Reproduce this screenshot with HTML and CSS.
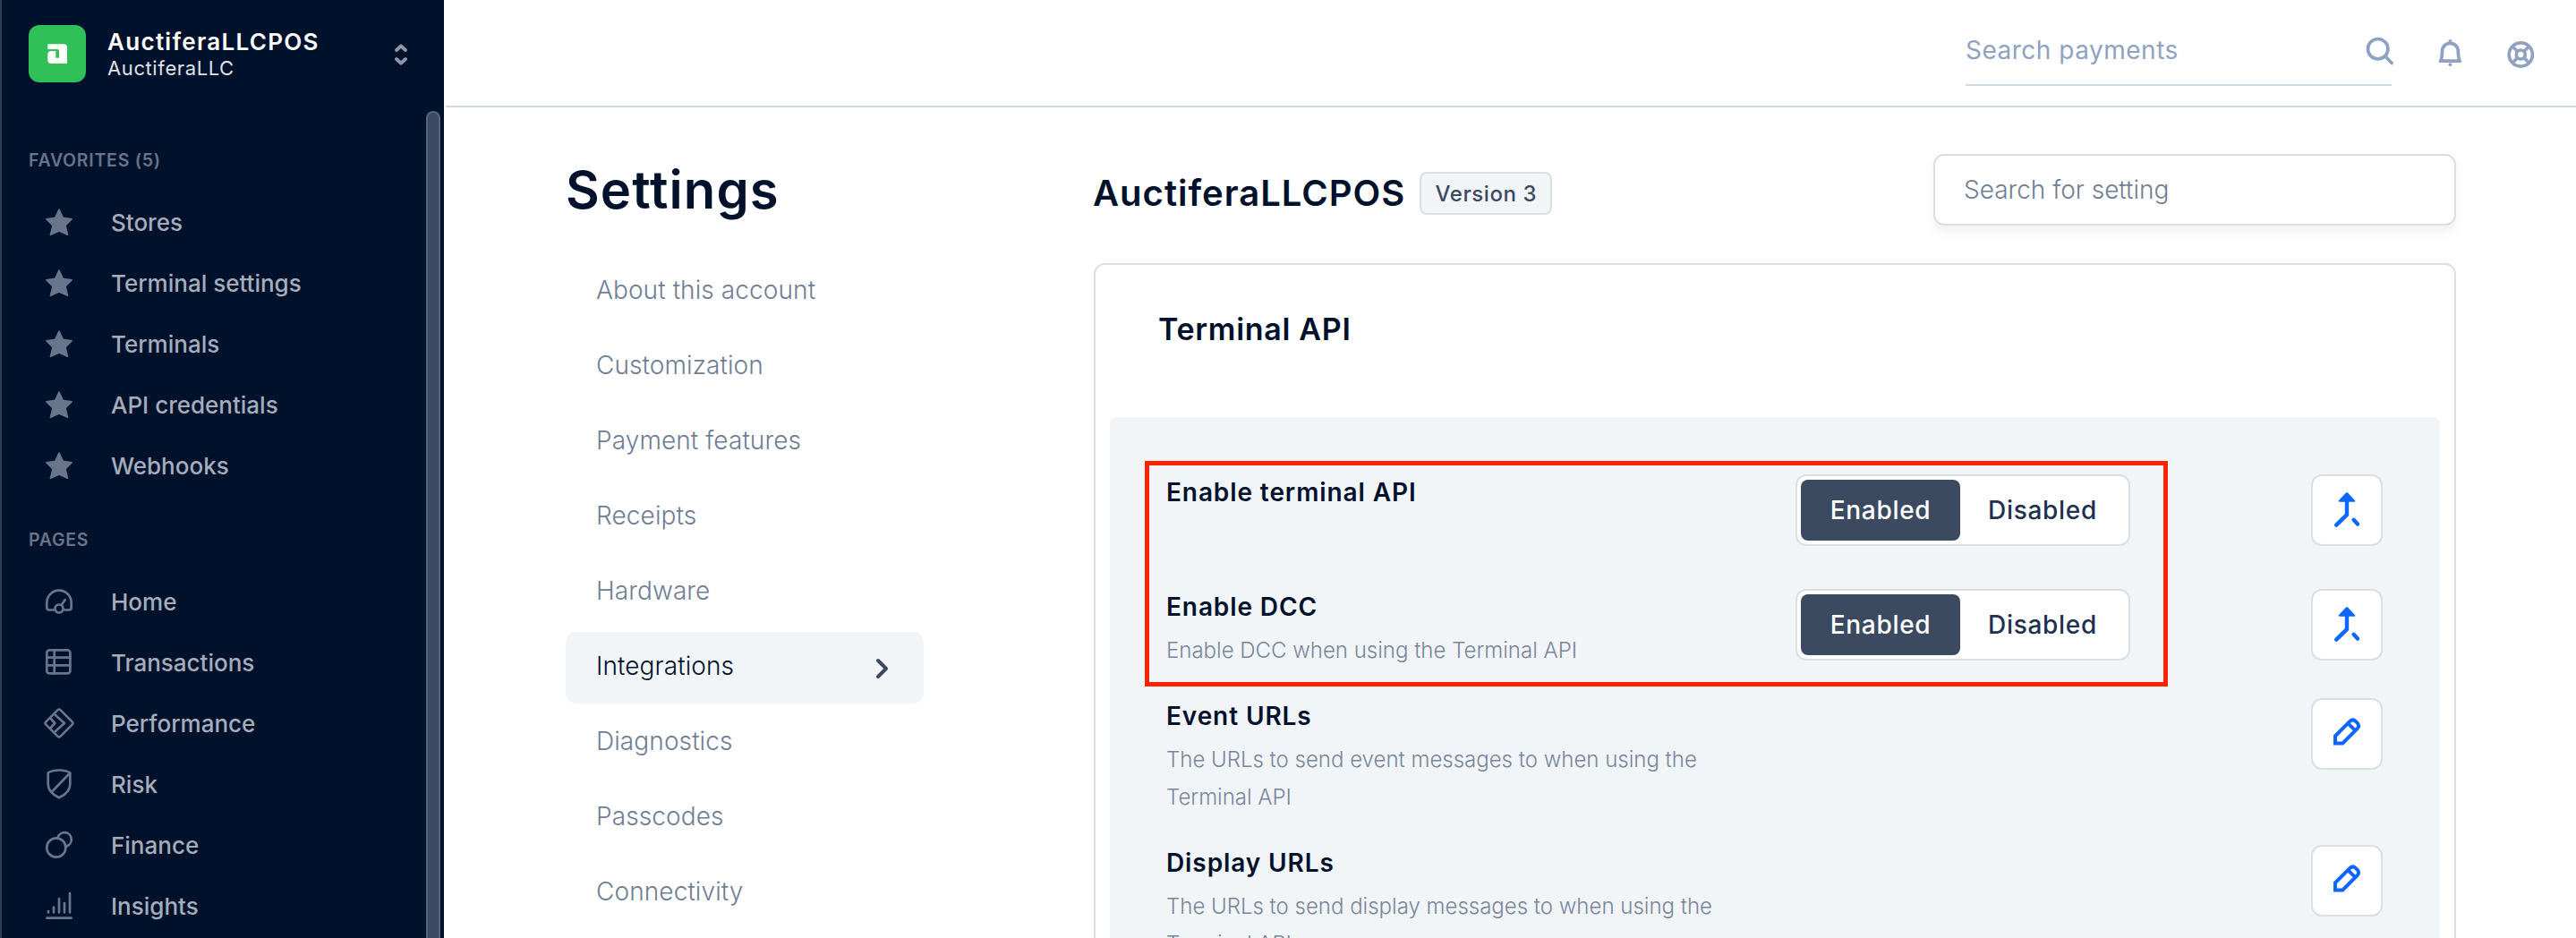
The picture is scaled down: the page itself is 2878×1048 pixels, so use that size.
FILE: index.html
```html
<!DOCTYPE html>
<html lang="en">
<head>
<meta charset="utf-8">
<title>Settings</title>
<link rel="stylesheet" href="styles.css">
</head>
<body>
<div class="app">
  <aside class="sidebar">
    <div class="account">
      <svg class="account-logo" viewBox="0 0 64 64"><rect width="64" height="64" rx="12" fill="#31c057"/><path fill="#fff" d="M21.3 21.3H39a4 4 0 0 1 4 4V43H25.3a4 4 0 0 1-4-4V33a4 4 0 0 1 4-4H30.3V36.7H34V29a2 2 0 0 0-2-2H21.3Z"/></svg>
      <div class="account-text">
        <div class="account-name">AuctiferaLLCPOS</div>
        <div class="account-company">AuctiferaLLC</div>
      </div>
      <svg class="account-switch" viewBox="0 0 20 28"><path d="M5 9 10 4.4 15 9M5 19l5 4.6L15 19"/></svg>
    </div>
    <div class="sidebar-body">
      <nav class="menu">
        <h2 class="menu-heading">FAVORITES (5)</h2>
        <a class="menu-item"><svg class="icon icon-solid" viewBox="0 0 36 36"><path d="M18 4 22.3 13.4 32.2 14.8 25 21.9 27.5 32.3 18 28 8.5 32.3 11 21.9 3.8 14.8 13.7 13.4Z"/></svg><span>Stores</span></a>
        <a class="menu-item"><svg class="icon icon-solid" viewBox="0 0 36 36"><path d="M18 4 22.3 13.4 32.2 14.8 25 21.9 27.5 32.3 18 28 8.5 32.3 11 21.9 3.8 14.8 13.7 13.4Z"/></svg><span>Terminal settings</span></a>
        <a class="menu-item"><svg class="icon icon-solid" viewBox="0 0 36 36"><path d="M18 4 22.3 13.4 32.2 14.8 25 21.9 27.5 32.3 18 28 8.5 32.3 11 21.9 3.8 14.8 13.7 13.4Z"/></svg><span>Terminals</span></a>
        <a class="menu-item"><svg class="icon icon-solid" viewBox="0 0 36 36"><path d="M18 4 22.3 13.4 32.2 14.8 25 21.9 27.5 32.3 18 28 8.5 32.3 11 21.9 3.8 14.8 13.7 13.4Z"/></svg><span>API credentials</span></a>
        <a class="menu-item"><svg class="icon icon-solid" viewBox="0 0 36 36"><path d="M18 4 22.3 13.4 32.2 14.8 25 21.9 27.5 32.3 18 28 8.5 32.3 11 21.9 3.8 14.8 13.7 13.4Z"/></svg><span>Webhooks</span></a>
        <h2 class="menu-heading menu-heading-next">PAGES</h2>
        <a class="menu-item"><svg class="icon" viewBox="0 0 36 36"><path d="M13.5 27.5H7Q4.3 27.5 4.3 24.8V19.3A13.7 13.7 0 0 1 31.7 19.3V24.8Q31.7 27.5 29 27.5H22.5M20.8 21.7 24.6 16.2"/><circle cx="18" cy="26" r="4.5"/></svg><span>Home</span></a>
        <a class="menu-item"><svg class="icon" viewBox="0 0 36 36"><rect x="4.3" y="4.3" width="26.1" height="26.1" rx="3"/><path d="M12.7 4.3V30.4M4.3 12.7H30.4M4.3 21.3H30.4"/></svg><span>Transactions</span></a>
        <a class="menu-item"><svg class="icon" viewBox="0 0 36 36"><path d="M16.4 3.4Q18 1.8 19.6 3.4L32.6 16.4Q34.2 18 32.6 19.6L19.6 32.6Q18 34.2 16.4 32.6L3.4 19.6Q1.8 18 3.4 16.4ZM8 12 13.3 18 8 24M12.3 7.6 24 18 12.3 28.4"/></svg><span>Performance</span></a>
        <a class="menu-item"><svg class="icon" viewBox="0 0 36 36"><path d="M18 2.5C23 2.5 27 3.4 30.3 5.3V18C30.3 26 25 30 18 33.2 11 30 5.7 26 5.7 18V5.3C9 3.4 13 2.5 18 2.5ZM29.8 6 9.6 27"/></svg><span>Risk</span></a>
        <a class="menu-item"><svg class="icon" viewBox="0 0 36 36"><circle cx="14.8" cy="21" r="10.6"/><path d="M16.5 9.9A7.8 7.8 0 1 1 26 19.5"/></svg><span>Finance</span></a>
        <a class="menu-item"><svg class="icon" viewBox="0 0 36 36"><path d="M6 24V25.5M12 19.5V25.5M18 10V25.5M24 15V25.5M30 4V25.5M4.4 31.7H31.6"/></svg><span>Insights</span></a>
      </nav>
      <div class="scrollbar"></div>
    </div>
  </aside>

  <div class="main">
    <header class="topbar">
      <div class="payment-search">
        <span>Search payments</span>
        <svg class="top-icon" viewBox="0 0 40 40"><circle cx="18.7" cy="17.7" r="11.2"/><path d="M27 26 34.2 33.5"/></svg>
      </div>
      <svg class="top-icon bell" viewBox="0 0 40 40"><path d="M9.5 29.2H31.3C29.5 26.5 29.5 23 29.3 18.2A8.9 8.9 0 0 0 11.5 18.2C11.4 23 11.4 26.5 9.5 29.2Z"/><g class="fill"><circle cx="20.4" cy="7" r="2"/><circle cx="20.4" cy="33.2" r="1.9"/></g></svg>
      <svg class="top-icon help" viewBox="0 0 40 40"><circle cx="20.3" cy="20" r="13.1"/><circle cx="20.3" cy="20" r="5"/><path d="M11.3 11 16.5 16.2M29.3 11 24.1 16.2M11.3 29 16.5 23.8M29.3 29 24.1 23.8"/></svg>
    </header>

    <div class="page">
      <section class="settings-nav">
        <h1>Settings</h1>
        <a class="tab">About this account</a>
        <a class="tab">Customization</a>
        <a class="tab">Payment features</a>
        <a class="tab">Receipts</a>
        <a class="tab">Hardware</a>
        <a class="tab tab-active">Integrations<svg class="tab-arrow" viewBox="0 0 20 28"><path d="M5 5 14 14 5 23"/></svg></a>
        <a class="tab">Diagnostics</a>
        <a class="tab">Passcodes</a>
        <a class="tab">Connectivity</a>
      </section>

      <section class="content">
        <div class="content-head">
          <h2 class="content-title">AuctiferaLLCPOS</h2>
          <span class="badge">Version 3</span>
          <div class="setting-search">Search for setting</div>
        </div>
        <div class="card">
          <h3 class="card-title">Terminal API</h3>
          <div class="panel">
            <div class="row row-short">
              <div class="row-text"><div class="row-title">Enable terminal API</div></div>
              <div class="toggle"><span class="option option-on">Enabled</span><span class="option">Disabled</span></div>
              <span class="action"><svg viewBox="18 16 44 48"><path class="stroke" d="M40 29V45.2L28.2 56.6M47.6 50.8 52 55.6" /><path class="head" d="M40 21 48.2 29.8H31.8Z"/></svg></span>
            </div>
            <div class="row">
              <div class="row-text"><div class="row-title">Enable DCC</div><p class="row-desc">Enable DCC when using the Terminal API</p></div>
              <div class="toggle"><span class="option option-on">Enabled</span><span class="option">Disabled</span></div>
              <span class="action"><svg viewBox="18 16 44 48"><path class="stroke" d="M40 29V45.2L28.2 56.6M47.6 50.8 52 55.6"/><path class="head" d="M40 21 48.2 29.8H31.8Z"/></svg></span>
            </div>
            <div class="row">
              <div class="row-text"><div class="row-title">Event URLs</div><p class="row-desc">The URLs to send event messages to when using the Terminal API</p></div>
              <span class="action"><svg viewBox="18 16 44 48"><path class="pencil" d="M27 50.4V42.3L43.4 25.9Q46.6 22.7 49.8 25.9L51.6 27.7Q54.8 30.9 51.6 34.1L35.3 50.4ZM41.5 28.3 49.3 36.1"/></svg></span>
            </div>
            <div class="row">
              <div class="row-text"><div class="row-title">Display URLs</div><p class="row-desc">The URLs to send display messages to when using the Terminal API</p></div>
              <span class="action"><svg viewBox="18 16 44 48"><path class="pencil" d="M27 50.4V42.3L43.4 25.9Q46.6 22.7 49.8 25.9L51.6 27.7Q54.8 30.9 51.6 34.1L35.3 50.4ZM41.5 28.3 49.3 36.1"/></svg></span>
            </div>
            <div class="highlight"></div>
          </div>
        </div>
      </section>
    </div>
  </div>
</div>
</body>
</html>
```
FILE: styles.css
```css
* {
  box-sizing: border-box;
}

body {
  margin: 0;
  background: #fff;
  color: #00112c;
  font-family: Inter, "Liberation Sans", sans-serif;
}

h1, h2, h3, p {
  margin: 0;
}

.app {
  display: grid;
  grid-template-columns: 496px 1fr;
  height: 1048px;
  overflow: hidden;
}

/* Sidebar */

.sidebar {
  display: flex;
  flex-direction: column;
  min-height: 0;
  background: #00112c;
  border-left: 2px solid #2c3b52;
}

.account {
  display: flex;
  flex: none;
  height: 124px;
  padding: 28px 38px 0 30px;
}

.account-logo {
  width: 64px;
  height: 64px;
}

.account-text {
  flex: 1;
  margin: 4px 0 0 24px;
}

.account-name {
  color: #fff;
  font-size: 26px;
  font-weight: 600;
  line-height: 30px;
  letter-spacing: 1.3px;
}

.account-company {
  color: #dfe2e7;
  font-size: 22px;
  line-height: 29px;
  letter-spacing: 0.6px;
}

.account-switch {
  width: 20px;
  height: 28px;
  margin-top: 19px;
  fill: none;
  stroke: #8d97a8;
  stroke-width: 4;
  stroke-linecap: round;
  stroke-linejoin: round;
}

.sidebar-body {
  display: flex;
  flex: 1;
  min-height: 0;
}

.menu {
  flex: 1;
}

.menu-heading {
  padding: 45px 0 25px 30px;
  color: #687489;
  font-size: 19.5px;
  font-weight: 600;
  line-height: 20px;
  letter-spacing: 0.75px;
}

.menu-heading-next {
  padding-top: 39px;
}

.menu-item {
  display: flex;
  align-items: center;
  gap: 40px;
  height: 68px;
  padding-left: 46px;
  color: #a5adbb;
  font-size: 26px;
  font-weight: 500;
  line-height: 34px;
}

.menu-item span {
  padding-top: 2px;
}

.icon {
  width: 36px;
  height: 36px;
  fill: none;
  stroke: #69758a;
  stroke-width: 2.7;
  stroke-linecap: round;
  stroke-linejoin: round;
}

.icon-solid {
  fill: #69758a;
  stroke-width: 1.6;
}

.scrollbar {
  width: 16px;
  margin-right: 4px;
  background: #3c4a61;
  border: 2px solid #56637a;
  border-bottom: 0;
  border-radius: 8px 8px 0 0;
}

/* Top bar */

.topbar {
  display: flex;
  justify-content: flex-end;
  height: 120px;
  margin-left: 2px;
  padding-right: 42px;
  border-bottom: 2px solid #cfdae3;
}

.payment-search {
  display: flex;
  justify-content: space-between;
  width: 476px;
  height: 96px;
  padding-top: 36px;
  border-bottom: 2px solid #cfdae3;
  color: #8fa2c1;
  font-size: 28px;
  font-weight: 400;
  line-height: 40px;
  letter-spacing: 0.5px;
}

.top-icon {
  width: 40px;
  height: 40px;
  fill: none;
  stroke: #8fa2c1;
  stroke-width: 3.7;
  stroke-linecap: round;
  stroke-linejoin: round;
}

.top-icon .fill {
  fill: #8fa2c1;
  stroke: none;
}

.payment-search .top-icon {
  margin: 1px -6px 0 0;
}

.bell {
  margin: 39px 39px 0 45px;
}

.help {
  margin-top: 41px;
}

/* Page */

.page {
  display: grid;
  grid-template-columns: 400px 1522px;
  column-gap: 190px;
  padding-left: 136px;
}

.settings-nav {
  display: flex;
  flex-direction: column;
  gap: 4px;
}

h1 {
  height: 162px;
  padding-top: 62px;
  font-size: 58px;
  font-weight: 600;
  line-height: 60px;
  letter-spacing: 1.1px;
}

.tab {
  display: flex;
  align-items: center;
  justify-content: space-between;
  height: 80px;
  padding: 0 36px 4px 34px;
  border-radius: 12px;
  color: #6f7d95;
  font-size: 28px;
  font-weight: 350;
  letter-spacing: 0.1px;
}

.tab-active {
  background: #f2f5f8;
  color: #00112c;
}

.tab-arrow {
  width: 20px;
  height: 28px;
  margin-top: 6px;
  fill: none;
  stroke: #3c4a61;
  stroke-width: 4;
  stroke-linecap: round;
  stroke-linejoin: round;
}

.content-head {
  display: flex;
  align-items: flex-start;
  margin-top: 52px;
}

.content-title {
  margin: 19px 16px 0 -1px;
  font-size: 40px;
  font-weight: 600;
  line-height: 49px;
  letter-spacing: 1px;
}

.badge {
  width: 148px;
  height: 48px;
  margin-top: 20px;
  border: 2px solid #dbdee2;
  border-radius: 8px;
  background: #f2f5f8;
  color: #3c4a61;
  font-size: 24px;
  font-weight: 500;
  line-height: 46px;
  letter-spacing: 0.6px;
  text-align: center;
}

.setting-search {
  width: 584px;
  height: 80px;
  margin-left: auto;
  padding-left: 32px;
  border: 2px solid #dbdee2;
  border-radius: 12px;
  background: #fff;
  box-shadow: 0 8px 16px rgba(0, 17, 44, 0.04), 0 4px 8px rgba(0, 17, 44, 0.03);
  color: #6f7d95;
  font-size: 28px;
  font-weight: 350;
  line-height: 77px;
}

.card {
  height: 860px;
  margin-top: 42px;
  padding: 52px 16px 0;
  border: 2px solid #dbdee2;
  border-radius: 12px;
}

.card-title {
  margin: 0 0 78px 54px;
  font-size: 34px;
  font-weight: 600;
  line-height: 40px;
  letter-spacing: 0.7px;
}

.panel {
  position: relative;
  display: flex;
  flex-direction: column;
  gap: 32px;
  height: 700px;
  padding: 64px 64px 0 63px;
  border-radius: 8px;
  background: #f2f5f8;
}

.row {
  display: flex;
  align-items: flex-start;
}

.row-short {
  min-height: 96px;
}

.row-text {
  width: 640px;
  margin-right: 63px;
}

.row-title {
  font-size: 28px;
  font-weight: 600;
  line-height: 40px;
  letter-spacing: 0.9px;
}

.row-desc {
  margin-top: 8px;
  color: #78859b;
  font-size: 24px;
  font-weight: 350;
  line-height: 42px;
}

.toggle {
  display: flex;
  width: 374px;
  height: 80px;
  padding: 4px;
  border: 2px solid #dbdee2;
  border-radius: 12px;
  background: #fff;
}

.option {
  flex: 1;
  border-radius: 8px;
  color: #1f3050;
  font-size: 28px;
  font-weight: 500;
  line-height: 69px;
  letter-spacing: 0.7px;
  text-align: center;
}

.option-on {
  flex: none;
  width: 178px;
  background: #3c4a61;
  color: #fff;
}

.action {
  display: grid;
  place-items: center;
  width: 80px;
  height: 80px;
  margin-left: auto;
  border: 2px solid #dbdee2;
  border-radius: 12px;
  background: #fff;
}

.action svg {
  width: 44px;
  height: 48px;
}

.action path {
  fill: none;
  stroke: #0d66ff;
  stroke-width: 4.4;
  stroke-linecap: round;
  stroke-linejoin: round;
}

.action .head {
  fill: #0d66ff;
  stroke-width: 2;
}

.action .pencil {
  stroke-width: 4;
  stroke-linecap: butt;
  stroke-linejoin: miter;
}

/* Marker drawn over the first two settings */

.highlight {
  position: absolute;
  top: 49px;
  left: 39px;
  width: 1143px;
  height: 252px;
  border: 5px solid #ff2200;
}
```
